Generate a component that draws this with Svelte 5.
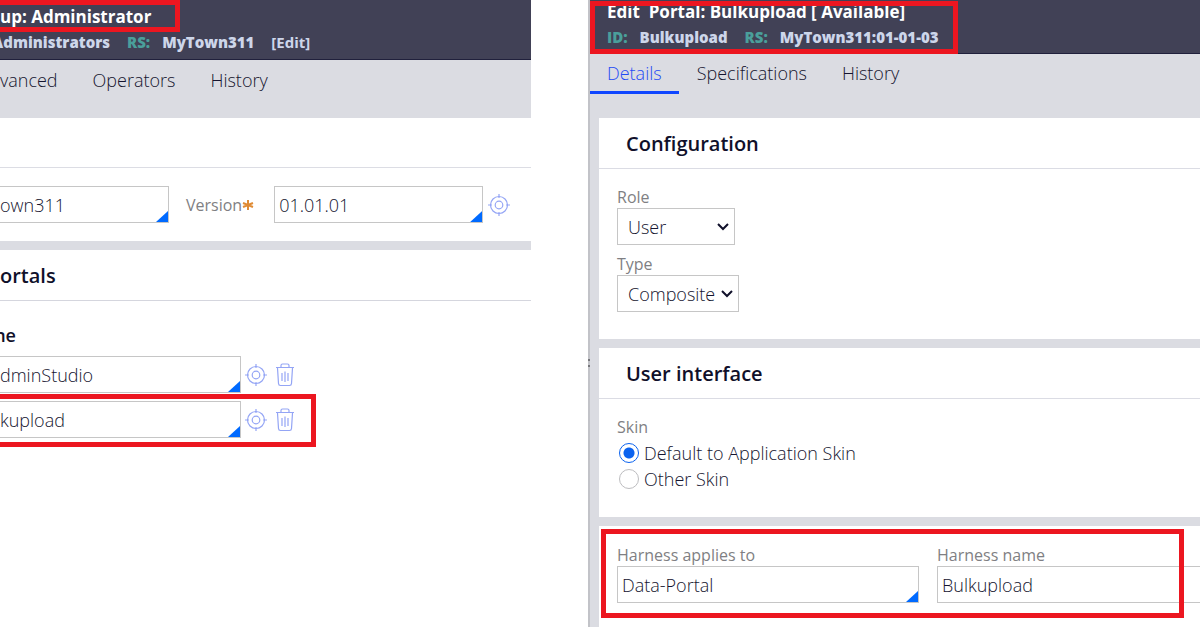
<script lang="ts">
	let version = $state('01.01.01');
	let ruleset = $state('own311');
	let portals = $state([
		{ id: 1, name: 'dminStudio', marked: false },
		{ id: 2, name: 'kupload', marked: true }
	]);

	let role = $state('User');
	let portalType = $state('Composite');
	let skin = $state('default');
	let harnessClass = $state('Data-Portal');
	let harnessName = $state('Bulkupload');

	function removePortal(id: number) {
		portals = portals.filter((p) => p.id !== id);
	}
</script>

{#snippet target()}
	<svg class="icon" viewBox="0 0 22 22" aria-hidden="true">
		<circle cx="11" cy="11" r="8.5" />
		<circle cx="11" cy="11" r="3.8" />
		<path d="M11 0v4M11 18v4M0 11h4M18 11h4" />
	</svg>
{/snippet}

{#snippet trash()}
	<svg class="icon trash" viewBox="0 0 20 24" aria-hidden="true">
		<path d="M1 4.5h18M6 4V2.5Q6 1 7.500 1h5Q14 1 14 2.500V4M2.500 5l1 15.500Q3.600 22.500 5.500 22.500h9Q16.400 22.500 16.500 20.500l1-15.500" />
		<path d="M7 10v8M10 8.500v10.500M13 10v8" />
	</svg>
{/snippet}

{#snippet chevron()}
	<svg class="chevron" viewBox="0 0 12 8" aria-hidden="true">
		<path d="M1 1l5 5 5-5" />
	</svg>
{/snippet}

<main class="workspace">
	<section class="pane group">
		<header class="head">
			<h1>up: Administrator</h1>
			<p class="meta">
				<b class="cut">Administrators</b>
				<span class="key">RS:</span>
				<b>MyTown311</b>
				<a href="#edit">[Edit]</a>
			</p>
			<span class="mark"></span>
		</header>
		<nav class="tabs">
			<a href="#advanced">vanced</a>
			<a href="#operators">Operators</a>
			<a href="#history">History</a>
		</nav>

		<div class="application">
			<span class="combo name">
				<input aria-label="Application name" bind:value={ruleset} />
			</span>
			<label for="version">Version<svg class="required" viewBox="0 0 12 12" aria-hidden="true"><path d="M6 1v10M1 4l10 4M11 4l-10 4" /></svg></label>
			<span class="combo version">
				<input id="version" bind:value={version} />
			</span>
			<button aria-label="Open application">{@render target()}</button>
		</div>

		<h2>ortals</h2>
		<div class="portals">
			<h3>ne</h3>
			{#each portals as portal (portal.id)}
				<div class="portal">
					<span class="combo">
						<input aria-label="Portal name" bind:value={portal.name} />
					</span>
					<button aria-label="Open portal">{@render target()}</button>
					<button aria-label="Delete portal" onclick={() => removePortal(portal.id)}>{@render trash()}</button>
					{#if portal.marked}
						<span class="mark"></span>
					{/if}
				</div>
			{/each}
		</div>
	</section>

	<section class="pane editor">
		<span class="grip"></span>
		<header class="head">
			<h1>Edit&nbsp; Portal: Bulkupload [ Available]</h1>
			<p class="meta">
				<span class="key">ID:</span>
				<b>Bulkupload</b>
				<span class="key">RS:</span>
				<b>MyTown311:01-01-03</b>
			</p>
			<span class="mark"></span>
		</header>
		<nav class="tabs">
			<a href="#details" class="active">Details</a>
			<a href="#specifications">Specifications</a>
			<a href="#portal-history">History</a>
		</nav>

		<div class="cards">
			<section class="card">
				<h2>Configuration</h2>
				<div class="body config">
					<label for="role">Role</label>
					<span class="drop">
						<select id="role" bind:value={role}>
							<option>User</option>
							<option>Developer</option>
						</select>
						{@render chevron()}
					</span>
					<label for="type">Type</label>
					<span class="drop wide">
						<select id="type" bind:value={portalType}>
							<option>Composite</option>
							<option>Custom</option>
						</select>
						{@render chevron()}
					</span>
				</div>
			</section>

			<section class="card">
				<h2>User interface</h2>
				<fieldset class="body skin">
					<legend>Skin</legend>
					<label><input type="radio" name="skin" value="default" bind:group={skin} />Default to Application Skin</label>
					<label><input type="radio" name="skin" value="other" bind:group={skin} />Other Skin</label>
				</fieldset>
			</section>

			<section class="card harness">
				<div class="field">
					<label for="harness-class">Harness applies to</label>
					<span class="combo">
						<input id="harness-class" bind:value={harnessClass} />
					</span>
				</div>
				<div class="field">
					<label for="harness-name">Harness name</label>
					<input id="harness-name" bind:value={harnessName} />
				</div>
				<span class="mark"></span>
			</section>
		</div>
	</section>
</main>

<style>
	:global(body) {
		background: #fff;
	}
	.workspace {
		display: grid;
		grid-template-columns: 531fr 612fr;
		column-gap: 57px;
		font-family: 'Open Sans', 'Noto Sans', sans-serif;
		font-size: 18px;
		font-weight: 300;
		line-height: 24px;
		color: #15152f;
		overflow: hidden;
	}
	.workspace * {
		box-sizing: border-box;
	}
	.pane {
		min-width: 0;
	}
	h1, h2, h3, p {
		margin: 0;
	}

	/* header bars */
	.head {
		position: relative;
		background: #414156;
		border-bottom: 1px solid #20203c;
		white-space: nowrap;
	}
	.group .head {
		height: 60px;
		padding-top: 5px;
	}
	.editor .head {
		height: 54px;
		padding-left: 17px;
	}
	h1 {
		font-size: 17px;
		line-height: 24px;
		font-weight: 700;
		color: #fff;
	}
	.meta {
		display: flex;
		font-size: 15px;
		line-height: 26px;
		font-weight: 800;
		color: #cdd6ea;
	}
	.meta b {
		font-weight: 800;
		margin-right: 17px;
	}
	.meta .cut {
		display: flex;
		justify-content: flex-end;
		width: 110px;
	}
	.meta a {
		color: inherit;
		text-decoration: none;
		font-weight: 700;
	}
	.key {
		color: #4a9f9b;
		margin-right: 12px;
	}

	/* red outlines laid over the parts under discussion */
	.mark {
		position: absolute;
		border: 5px solid #ec1620;
		pointer-events: none;
	}
	.group .head .mark {
		left: -5px;
		top: 0;
		width: 185px;
		height: 32px;
	}
	.editor .head .mark {
		left: 0;
		top: 1px;
		width: 368px;
		height: 53px;
	}
	.portal .mark {
		left: -5px;
		top: -7px;
		width: 321px;
		height: 53px;
	}
	.harness .mark {
		left: 2px;
		top: 3px;
		right: 16px;
		height: 89px;
	}

	.tabs {
		display: flex;
		background: #dbdce2;
	}
	.tabs a {
		padding: 8px 17px;
		margin-right: 1px;
		color: #15152f;
		text-decoration: none;
		border-bottom: 3px solid transparent;
	}
	.group .tabs {
		height: 58px;
	}
	.group .tabs a:first-child {
		padding-left: 0;
	}
	.editor .tabs {
		height: 64px;
	}
	.tabs .active {
		color: #1f4bf5;
	}
	.editor .tabs a {
		height: 40px;
		padding-top: 7px;
	}
	.editor .tabs .active {
		border-bottom-color: #0f46ff;
	}

	/* form controls */
	input:not([type]), select {
		width: 100%;
		height: 37px;
		border: 1px solid #c6c6c6;
		border-radius: 0;
		background: #fff;
		color: #15152f;
		font-family: inherit;
		font-size: 18px;
		font-weight: 300;
		padding: 0 4px;
		outline: none;
	}
	.combo {
		position: relative;
		display: block;
	}
	.combo input:not([type]) {
		display: block;
	}
	.combo::after {
		content: '';
		position: absolute;
		right: 1px;
		bottom: 1px;
		width: 12px;
		height: 11px;
		background: #006aff;
		clip-path: polygon(100% 0, 100% 100%, 0 100%);
	}
	label, legend {
		font-size: 16px;
		font-weight: 400;
		line-height: 22px;
		color: #7f7f83;
	}
	button {
		display: flex;
		padding: 0;
		border: 0;
		background: none;
		cursor: pointer;
	}
	.icon {
		width: 22px;
		height: 22px;
		fill: none;
		stroke: #94a5f5;
		stroke-width: 1.2;
	}
	.trash {
		width: 20px;
		height: 24px;
	}

	h2 {
		font-size: 20px;
		line-height: 52px;
		font-weight: 600;
		color: #10102a;
	}
	.group h2 {
		height: 60px;
		border-top: 9px solid #dbdce2;
		border-bottom: 1px solid #d5d6de;
	}
	.application {
		display: flex;
		align-items: center;
		height: 74px;
		margin-top: 49px;
		border-top: 1px solid #dcdde4;
	}
	.name {
		width: 169px;
	}
	.group .name input, .portal .combo input {
		border-left: 0;
		padding-left: 0;
	}
	.application label {
		display: flex;
		align-items: center;
		margin: 0 20px 0 17px;
	}
	.required {
		width: 12px;
		height: 12px;
		stroke: #df8b35;
		stroke-width: 2;
	}
	.version {
		width: 209px;
		margin-right: 5px;
	}
	.portals {
		display: flex;
		flex-direction: column;
		gap: 8px;
		padding-top: 22px;
	}
	h3 {
		display: flex;
		justify-content: flex-end;
		width: 16px;
		font-size: 18px;
		line-height: 25px;
		font-weight: 600;
		color: #10102a;
	}
	.portal {
		position: relative;
		display: flex;
		align-items: center;
	}
	.portal .combo {
		width: 241px;
		margin-right: 4px;
	}
	.portal button + button {
		margin-left: 8px;
	}

	/* portal editor */
	.editor {
		position: relative;
		border-left: 2px solid #c2c3c8;
		background: #dbdce2;
	}
	.grip {
		position: absolute;
		left: -2px;
		top: 359px;
		width: 2px;
		height: 8px;
		border-top: 2px solid #77777c;
		border-bottom: 2px solid #77777c;
	}
	.cards {
		display: flex;
		flex-direction: column;
		gap: 9px;
		padding-left: 9px;
	}
	.card {
		position: relative;
		background: #fff;
	}
	.card h2 {
		height: 51px;
		padding-left: 27px;
		border-bottom: 1px solid #dbdce4;
	}
	.body {
		margin: 0;
		border: 0;
		padding: 17px 18px 27px;
	}
	.config label {
		display: block;
	}
	.drop {
		position: relative;
		display: block;
		width: 118px;
		margin-bottom: 8px;
	}
	.drop:last-child {
		margin-bottom: 0;
	}
	.wide {
		width: 122px;
	}
	.drop select {
		appearance: none;
		display: block;
		padding-left: 10px;
	}
	.chevron {
		position: absolute;
		right: 6px;
		top: 15px;
		width: 12px;
		height: 8px;
		fill: none;
		stroke: #11112b;
		stroke-width: 2;
		pointer-events: none;
	}
	.skin {
		padding-top: 0;
		padding-bottom: 25px;
	}
	legend {
		padding: 17px 0 2px;
	}
	.skin label {
		display: flex;
		align-items: center;
		gap: 5px;
		font-size: 18px;
		font-weight: 300;
		line-height: 26px;
		color: #15152f;
	}
	input[type='radio'] {
		appearance: none;
		width: 20px;
		height: 20px;
		margin: 0 0 0 2px;
		border: 1px solid #bdbdc0;
		border-radius: 50%;
		background: #fff;
	}
	input[type='radio']:checked {
		border-color: #0a62ef;
		background: radial-gradient(circle, #0a62ef 5px, #fff 6px);
	}
	.harness {
		display: flex;
		gap: 18px;
		padding: 18px 0 24px 18px;
	}
	.field {
		flex: 0 0 302px;
	}
	.field label {
		display: block;
	}
</style>
